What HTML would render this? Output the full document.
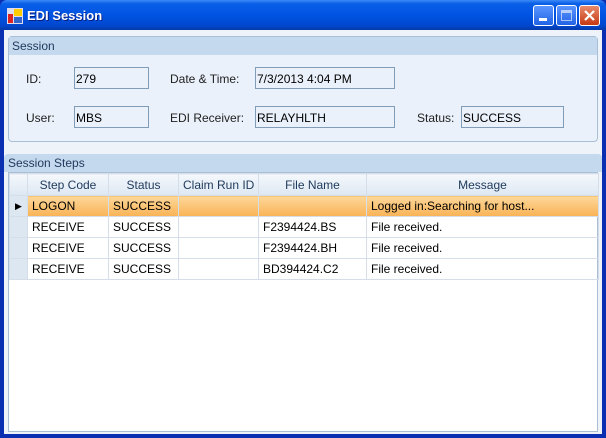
<!DOCTYPE html><html><head><style>
*{margin:0;padding:0;box-sizing:border-box}
body{width:606px;height:438px;overflow:hidden;font-family:"Liberation Sans",sans-serif;font-size:12px;background:#0a2fb0;position:relative}
.title{position:absolute;left:0;top:0;width:606px;height:30px;background:linear-gradient(#3d8af7 0,#0a5fe8 12%,#0054e3 50%,#0047cf 85%,#0639a8 100%);border-radius:7px 7px 0 0}
.title span{position:absolute;left:27px;top:8px;color:#fff;font-weight:bold;font-size:13px;font-family:"Liberation Sans",sans-serif;text-shadow:1px 1px #0a1e80}
.client{position:absolute;left:4px;top:30px;width:598px;height:404px;background:#eef3fa}
.btn{position:absolute;top:5px;width:21px;height:21px;border:1px solid #fff;border-radius:3px;background:linear-gradient(#5a95ff,#2163e6)}
.grp{position:absolute;left:4px;top:6px;width:590px;height:106px;border:1px solid #a9bfd6;border-radius:4px;background:#eaf1fa}
.grp .h{height:18px;background:#c4d8ee;color:#1e395b;padding:2px 3px;font-size:12px}
.lbl{position:absolute;color:#222}
.box{position:absolute;height:22px;border:1px solid #7f9db9;background:#eaf1fa;padding:4px 1px;color:#000}
.sh{position:absolute;left:0;top:124px;width:598px;height:18px;background:#c4d8ee;color:#1e395b;padding:2px 4px;border-radius:4px 4px 0 0}
.grid{position:absolute;left:4px;top:142px;width:590px;height:260px;background:#fff;border:1px solid #a9bfd6}
table{border-collapse:collapse;font-size:12px;table-layout:fixed;width:590px}
td,th{height:21px;border:1px solid #d5dde8;padding:0 4px;white-space:nowrap;overflow:hidden;font-weight:normal;text-align:left}
th{background:linear-gradient(#f4f8fc,#dde7f2);color:#1e395b;text-align:center;height:22px}
td.rh{background:#dde7f2;padding:0}
tr.sel td{background:linear-gradient(#fdd89a,#f9b255)}
</style></head><body>
<div class="title">
<svg style="position:absolute;left:7px;top:8px" width="16" height="16"><rect x="0" y="0" width="16" height="16" fill="#dde"/><rect x="1" y="6" width="5" height="9" fill="#d22"/><rect x="7" y="1" width="8" height="7" fill="#fc0"/><rect x="7" y="9" width="8" height="6" fill="#36c"/></svg>
<span>EDI Session</span>
<div class="btn" style="left:533px"><div style="position:absolute;left:5px;top:12px;width:8px;height:3px;background:#fff"></div></div>
<div class="btn" style="left:556px"><div style="position:absolute;left:4px;top:4px;width:11px;height:11px;border:1px solid #fff;border-top-width:3px;opacity:.6"></div></div>
<div class="btn" style="left:579px;background:linear-gradient(#e88a6c,#c73a14)"><svg width="19" height="19" style="position:absolute;left:0;top:0"><path d="M5 5L14 14M14 5L5 14" stroke="#fff" stroke-width="2.2"/></svg></div>
</div>
<div class="client">
<div class="grp"><div class="h">Session</div></div>
<div class="lbl" style="left:22px;top:42px">ID:</div>
<div class="box" style="left:70px;top:37px;width:75px">279</div>
<div class="lbl" style="left:166px;top:42px">Date &amp; Time:</div>
<div class="box" style="left:251px;top:37px;width:140px">7/3/2013 4:04 PM</div>
<div class="lbl" style="left:22px;top:81px">User:</div>
<div class="box" style="left:70px;top:76px;width:75px">MBS</div>
<div class="lbl" style="left:166px;top:81px">EDI Receiver:</div>
<div class="box" style="left:251px;top:76px;width:140px">RELAYHLTH</div>
<div class="lbl" style="left:413px;top:81px">Status:</div>
<div class="box" style="left:457px;top:76px;width:103px">SUCCESS</div>
<div class="sh">Session Steps</div>
<div class="grid"><table>
<colgroup><col style="width:18px"><col style="width:81px"><col style="width:70px"><col style="width:80px"><col style="width:108px"><col></colgroup>
<tr><th></th><th>Step Code</th><th>Status</th><th>Claim Run ID</th><th>File Name</th><th>Message</th></tr>
<tr class="sel"><td class="rh" style="background:#dde7f2;text-align:center;font-size:9px">▶</td><td>LOGON</td><td>SUCCESS</td><td></td><td></td><td>Logged in:Searching for host...</td></tr>
<tr><td class="rh"></td><td>RECEIVE</td><td>SUCCESS</td><td></td><td>F2394424.BS</td><td>File received.</td></tr>
<tr><td class="rh"></td><td>RECEIVE</td><td>SUCCESS</td><td></td><td>F2394424.BH</td><td>File received.</td></tr>
<tr><td class="rh"></td><td>RECEIVE</td><td>SUCCESS</td><td></td><td>BD394424.C2</td><td>File received.</td></tr>
</table></div>
</div>
</body></html>
